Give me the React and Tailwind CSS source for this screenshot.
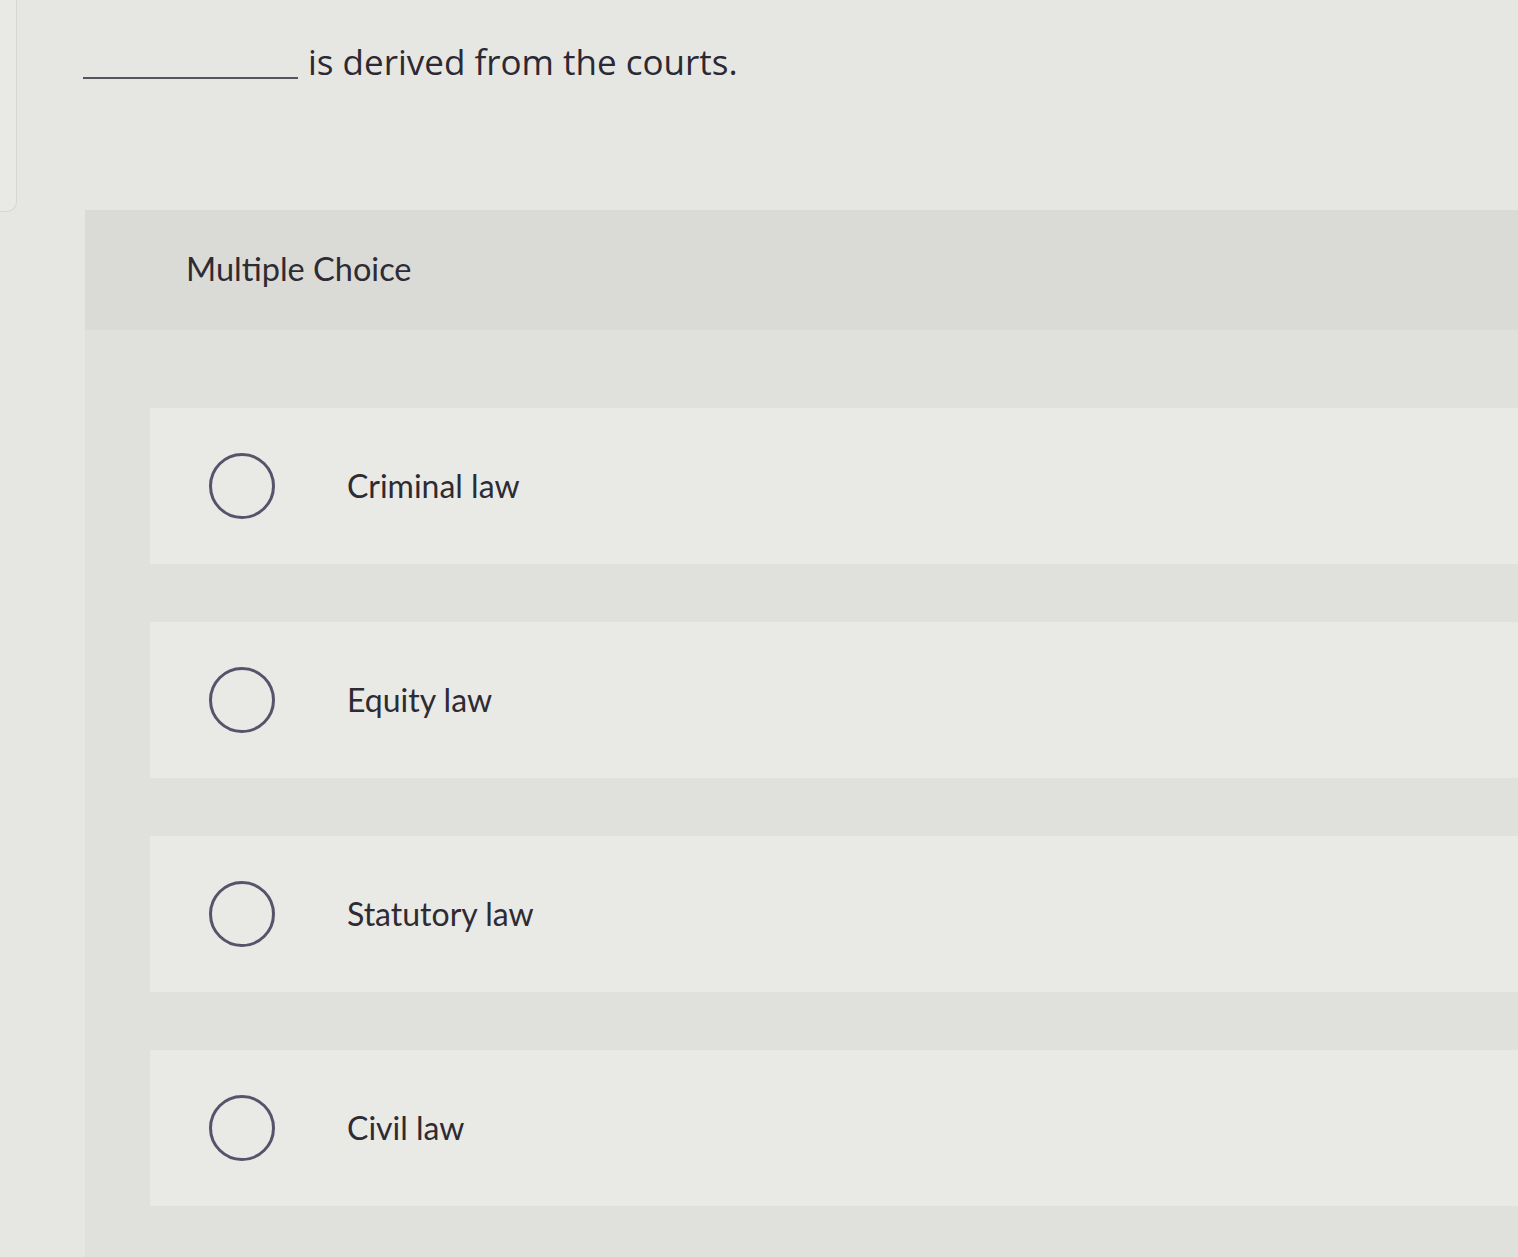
import React from "react";

const options = ["Criminal law", "Equity law", "Statutory law", "Civil law"];

export default function App() {
  return (
    <div className="relative h-[1257px] w-[1518px] overflow-hidden bg-[#e6e6e3] text-[#2e2b33]" style={{ fontFamily: "Lato, 'Open Sans', sans-serif" }}>
      <div className="absolute left-0 top-0 h-[212px] w-[17px] rounded-br-[10px] border-r border-b border-[#d6d6d3] bg-[#e9e9e6]" />
      <div className="flex items-end pl-[83px] pt-[40px]">
        <div className="mb-[5px] h-[2px] w-[215px] bg-[#57535e]" />
        <div className="ml-[10px] text-[35px] leading-[44px] text-[#2c2933]" style={{ fontFamily: "'Open Sans', sans-serif" }}>
          is derived from the courts.
        </div>
      </div>
      <div className="ml-[85px] mt-[126px] bg-[#e0e0dd] pb-[80px]">
        <div className="flex h-[120px] items-center bg-[#dadad7] pl-[101px] pb-[2px]">
          <span className="text-[32.5px] text-[#2e2b33]">Multiple Choice</span>
        </div>
        <div className="flex flex-col gap-[58px] pl-[65px] pt-[78px]">
          {options.map((o) => (
            <div key={o} className="flex h-[156px] items-center bg-[#e9e9e6]">
              <div className="ml-[59px] h-[66px] w-[66px] rounded-full border-[3px] border-[#58526a]" />
              <span className="ml-[72px] text-[32px] text-[#2e2b33]">{o}</span>
            </div>
          ))}
        </div>
      </div>
    </div>
  );
}
